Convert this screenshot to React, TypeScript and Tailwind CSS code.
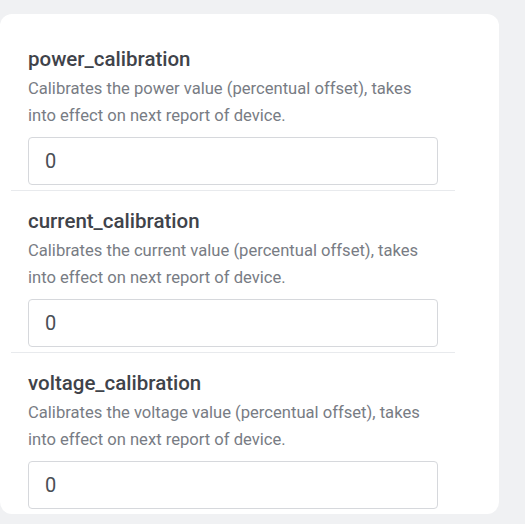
const fields = [
  {
    name: "power_calibration",
    description:
      "Calibrates the power value (percentual offset), takes into effect on next report of device.",
  },
  {
    name: "current_calibration",
    description:
      "Calibrates the current value (percentual offset), takes into effect on next report of device.",
  },
  {
    name: "voltage_calibration",
    description:
      "Calibrates the voltage value (percentual offset), takes into effect on next report of device.",
  },
];

export default function App() {
  return (
    <div className="min-h-[524px] bg-[#f0f1f3] pt-[14px] font-['Roboto',sans-serif]">
      <div className="w-[499px] rounded-xl bg-white pt-[15px]">
        {fields.map((field, i) => (
          <div
            key={field.name}
            className={
              "ml-[11px] w-[444px] px-[17px] pb-[5px] " +
              (i > 0 ? "border-t border-[#e8eaed] pt-[18px]" : "pt-[18px]")
            }
          >
            <div className="text-[20.5px] leading-[24px] font-medium text-[#3f434a]">
              {field.name}
            </div>
            <p className="mt-[4px] text-[16.6px] leading-[27px] text-[#787c84]">
              {field.description}
            </p>
            <input
              type="text"
              defaultValue="0"
              className="mt-[8px] block h-[48px] w-full rounded-[4px] border border-[#d6d8dc] px-[16px] text-[20px] text-[#4a4e55] outline-none"
            />
          </div>
        ))}
      </div>
    </div>
  );
}
